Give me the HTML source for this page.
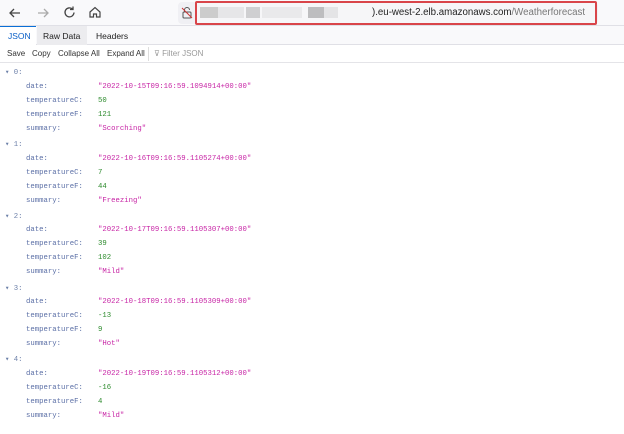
<!DOCTYPE html>
<html><head><meta charset="utf-8"><style>
*{margin:0;padding:0;box-sizing:border-box}
body{width:624px;height:434px;overflow:hidden;background:#fff;font-family:"Liberation Sans",sans-serif;position:relative}
.a{position:absolute;white-space:nowrap}
.top{position:absolute;left:0;top:0;width:624px;height:26px;background:#f9f9fb;border-bottom:1px solid #e0e0e6}
.tabs{position:absolute;left:0;top:26px;width:624px;height:19px;background:#f9f9fb;border-bottom:1px solid #e0e0e6}
.tb{position:absolute;left:0;top:45px;width:624px;height:18px;background:#fff;border-bottom:1px solid #e4e4e8}
.t{font-size:8px;color:#333;top:49px}
.m{font-family:"Liberation Mono",monospace;font-size:7.3px}
.k{color:#5b6fa6}.s{color:#c724a5}.n{color:#2c8a2c}.i{color:#6b7fa8}
</style></head><body>
<div class="top"></div>
<svg class="a" style="left:8px;top:6px" width="14" height="14" viewBox="0 0 14 14" fill="none" stroke="#444" stroke-width="1.3"><path d="M12 7H2M6 3L2 7l4 4"/></svg>
<svg class="a" style="left:36px;top:6px" width="14" height="14" viewBox="0 0 14 14" fill="none" stroke="#aaa" stroke-width="1.3"><path d="M2 7h10M8 3l4 4-4 4"/></svg>
<svg class="a" style="left:62px;top:5px" width="15" height="15" viewBox="0 0 15 15" fill="none" stroke="#444" stroke-width="1.3"><path d="M12 7.5A4.5 4.5 0 1 1 10.5 4M11 1.5v3h-3"/></svg>
<svg class="a" style="left:88px;top:5px" width="14" height="14" viewBox="0 0 14 14" fill="none" stroke="#444" stroke-width="1.2"><path d="M2 7L7 2.5 12 7V12H8.5V9h-3v3H2z"/></svg>
<div class="a" style="left:178px;top:2px;width:420px;height:22px;background:#f0f0f4;border-radius:4px"></div>
<svg class="a" style="left:181px;top:6px" width="12" height="13" viewBox="0 0 12 13" fill="none" stroke="#555" stroke-width="1"><rect x="2" y="6" width="8" height="6" rx="1"/><path d="M3.5 6V4a2.5 2.5 0 0 1 5 0"/><path d="M1 2l10 10" stroke="#c33"/></svg>
<div class="a" style="left:195px;top:1px;width:402px;height:24px;border:2px solid #d9454a;border-radius:2px;background:#f6f6f8"></div>
<div class="a" style="left:200px;top:7px;width:18px;height:11px;background:#ccc"></div>
<div class="a" style="left:218px;top:7px;width:26px;height:11px;background:#e6e6e8"></div>
<div class="a" style="left:246px;top:7px;width:14px;height:11px;background:#cfcfd1"></div>
<div class="a" style="left:262px;top:7px;width:40px;height:11px;background:#e9e9eb"></div>
<div class="a" style="left:308px;top:7px;width:16px;height:11px;background:#bdbdbf"></div>
<div class="a" style="left:324px;top:7px;width:14px;height:11px;background:#e4e4e6"></div>
<div class="a" style="left:372px;top:7px;font-size:9.7px;color:#222">).eu-west-2.elb.amazonaws.com<span style="color:#777">/Weatherforecast</span></div>
<div class="tabs"></div>
<div class="a" style="left:0;top:26px;width:36px;height:19px;background:#fff;border-top:1px solid #0a6fd6"></div>
<div class="a" style="left:8px;top:31px;font-size:8.5px;color:#0a5fc7">JSON</div>
<div class="a" style="left:37px;top:26px;width:50px;height:19px;background:#ececef"></div>
<div class="a" style="left:43px;top:31px;font-size:8.5px;color:#222">Raw Data</div>
<div class="a" style="left:96px;top:31px;font-size:8.5px;color:#222">Headers</div>
<div class="tb"></div>
<div class="a t" style="left:7px">Save</div>
<div class="a t" style="left:32px">Copy</div>
<div class="a t" style="left:58px">Collapse All</div>
<div class="a t" style="left:107px">Expand All</div>
<div class="a" style="left:148px;top:47px;width:1px;height:14px;background:#ddd"></div>
<div class="a t" style="left:154px;color:#999">⊽ Filter JSON</div>
<div class="m">
<div class="a i" style="left:5px;top:67px">▾ 0:</div>
<div class="a k" style="left:26px;top:83px">date:</div><div class="a s" style="left:98px;top:83px">"2022-10-15T09:16:59.1094914+00:00"</div>
<div class="a k" style="left:26px;top:97px">temperatureC:</div><div class="a n" style="left:98px;top:97px">50</div>
<div class="a k" style="left:26px;top:111px">temperatureF:</div><div class="a n" style="left:98px;top:111px">121</div>
<div class="a k" style="left:26px;top:125px">summary:</div><div class="a s" style="left:98px;top:125px">"Scorching"</div>
<div class="a i" style="left:5px;top:139px">▾ 1:</div>
<div class="a k" style="left:26px;top:155px">date:</div><div class="a s" style="left:98px;top:155px">"2022-10-16T09:16:59.1105274+00:00"</div>
<div class="a k" style="left:26px;top:169px">temperatureC:</div><div class="a n" style="left:98px;top:169px">7</div>
<div class="a k" style="left:26px;top:183px">temperatureF:</div><div class="a n" style="left:98px;top:183px">44</div>
<div class="a k" style="left:26px;top:197px">summary:</div><div class="a s" style="left:98px;top:197px">"Freezing"</div>
<div class="a i" style="left:5px;top:211px">▾ 2:</div>
<div class="a k" style="left:26px;top:226px">date:</div><div class="a s" style="left:98px;top:226px">"2022-10-17T09:16:59.1105307+00:00"</div>
<div class="a k" style="left:26px;top:240px">temperatureC:</div><div class="a n" style="left:98px;top:240px">39</div>
<div class="a k" style="left:26px;top:254px">temperatureF:</div><div class="a n" style="left:98px;top:254px">102</div>
<div class="a k" style="left:26px;top:268px">summary:</div><div class="a s" style="left:98px;top:268px">"Mild"</div>
<div class="a i" style="left:5px;top:283px">▾ 3:</div>
<div class="a k" style="left:26px;top:298px">date:</div><div class="a s" style="left:98px;top:298px">"2022-10-18T09:16:59.1105309+00:00"</div>
<div class="a k" style="left:26px;top:312px">temperatureC:</div><div class="a n" style="left:98px;top:312px">-13</div>
<div class="a k" style="left:26px;top:326px">temperatureF:</div><div class="a n" style="left:98px;top:326px">9</div>
<div class="a k" style="left:26px;top:340px">summary:</div><div class="a s" style="left:98px;top:340px">"Hot"</div>
<div class="a i" style="left:5px;top:354px">▾ 4:</div>
<div class="a k" style="left:26px;top:370px">date:</div><div class="a s" style="left:98px;top:370px">"2022-10-19T09:16:59.1105312+00:00"</div>
<div class="a k" style="left:26px;top:384px">temperatureC:</div><div class="a n" style="left:98px;top:384px">-16</div>
<div class="a k" style="left:26px;top:398px">temperatureF:</div><div class="a n" style="left:98px;top:398px">4</div>
<div class="a k" style="left:26px;top:412px">summary:</div><div class="a s" style="left:98px;top:412px">"Mild"</div>
</div>
</body></html>
